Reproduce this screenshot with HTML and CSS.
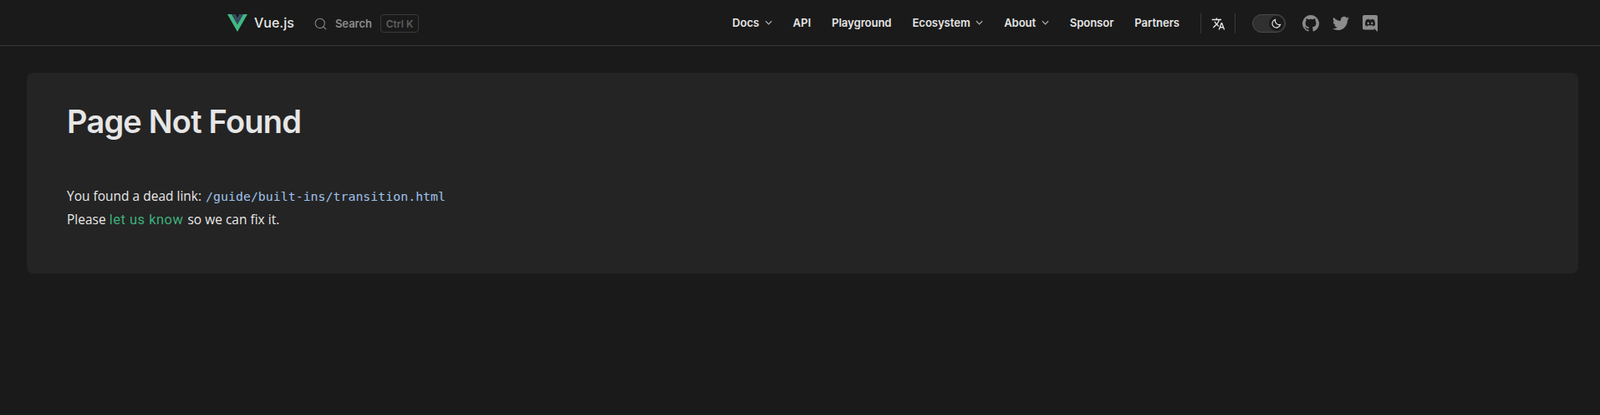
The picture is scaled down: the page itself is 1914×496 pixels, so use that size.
FILE: index.html
```html
<!DOCTYPE html>
<html lang="en">
<head>
<meta charset="utf-8">
<title>Page Not Found | Vue.js</title>
<link rel="stylesheet" href="styles.css">
</head>
<body>
<header class="nav">
  <div class="nav-inner">
    <a class="brand" href="#">
      <svg class="logo" viewBox="0 0 261.76 226.69" aria-hidden="true"><path fill="#41b883" d="M161.096.001l-30.225 52.351L100.647.001H-.005l130.876 226.688L261.749.001z"/><path fill="#34495e" d="M161.096.001l-30.225 52.351L100.647.001H52.346l78.526 136.01L209.398.001z"/></svg>
      <span>Vue.js</span>
    </a>
    <button class="search" type="button">
      <svg class="search-icon" viewBox="0 0 20 20" aria-hidden="true"><path d="M14.386 14.386l4.088 4.088-4.088-4.088A7.533 7.533 0 1 1 3.733 3.733a7.533 7.533 0 0 1 10.653 10.653z" fill="none" stroke="currentColor" stroke-width="1.4" stroke-linecap="round" stroke-linejoin="round"/></svg>
      <span class="search-label">Search</span>
      <kbd class="keys">Ctrl K</kbd>
    </button>
    <nav class="links">
      <a class="link" href="#">Docs<svg class="caret" viewBox="0 0 10 6"><path d="M1 1l4 4 4-4" /></svg></a>
      <a class="link" href="#">API</a>
      <a class="link" href="#">Playground</a>
      <a class="link" href="#">Ecosystem<svg class="caret" viewBox="0 0 10 6"><path d="M1 1l4 4 4-4" /></svg></a>
      <a class="link" href="#">About<svg class="caret" viewBox="0 0 10 6"><path d="M1 1l4 4 4-4" /></svg></a>
      <a class="link" href="#">Sponsor</a>
      <a class="link" href="#">Partners</a>
    </nav>
    <div class="translate">
      <svg viewBox="0 0 24 24" aria-hidden="true"><path fill="currentColor" d="M12.87 15.07l-2.54-2.51.03-.03c1.74-1.94 2.98-4.17 3.71-6.53H17V4h-7V2H8v2H1v1.99h11.17C11.5 7.92 10.44 9.75 9 11.35 8.07 10.32 7.3 9.19 6.69 8h-2c.73 1.63 1.73 3.17 2.98 4.56l-5.09 5.02L4 19l5-5 3.11 3.11.76-2.04zM18.5 10h-2L12 22h2l1.12-3h4.75L21 22h2l-4.5-12zm-2.62 7l1.62-4.33L19.12 17h-3.24z"/></svg>
    </div>
    <div class="toggle"><span class="knob"><svg viewBox="0 0 24 24" aria-hidden="true"><path d="M20 14.500A8.500 8.500 0 0 1 9.500 4a8.500 8.500 0 1 0 10.500 10.500z"/></svg></span></div>
    <div class="social">
      <svg viewBox="0 0 20 20" aria-hidden="true"><path d="M10 0a10 10 0 0 0-3.160 19.490c.5.090.680-.220.680-.480v-1.700c-2.780.6-3.370-1.340-3.370-1.340-.450-1.160-1.110-1.460-1.110-1.460-.910-.620.070-.610.070-.610 1 .070 1.530 1.030 1.530 1.030.890 1.530 2.340 1.090 2.910.830.090-.650.350-1.090.630-1.340-2.220-.250-4.550-1.110-4.550-4.940 0-1.090.390-1.980 1.030-2.680-.100-.250-.450-1.270.100-2.650 0 0 .840-.270 2.750 1.020a9.600 9.600 0 0 1 5 0c1.910-1.290 2.750-1.020 2.750-1.020.550 1.380.200 2.400.100 2.650.640.700 1.030 1.590 1.030 2.680 0 3.840-2.340 4.680-4.570 4.930.360.310.680.920.680 1.850v2.740c0 .270.180.580.690.480A10 10 0 0 0 10 0z"/></svg>
      <svg viewBox="0 0 20 20" aria-hidden="true"><path d="M20 3.800c-.740.330-1.530.550-2.360.650a4.100 4.100 0 0 0 1.800-2.270c-.790.470-1.670.810-2.600 1a4.100 4.100 0 0 0-7 3.740A11.650 11.650 0 0 1 1.390 2.630a4.100 4.100 0 0 0 1.270 5.480 4.080 4.080 0 0 1-1.860-.510v.050a4.100 4.100 0 0 0 3.290 4.020 4.100 4.100 0 0 1-1.850.070 4.100 4.100 0 0 0 3.830 2.850A8.230 8.230 0 0 1 0 16.290 11.600 11.600 0 0 0 6.290 18.100c7.550 0 11.670-6.250 11.670-11.670l-.010-.530A8.300 8.300 0 0 0 20 3.800z"/></svg>
      <svg class="discord" viewBox="0 0 20 22" aria-hidden="true"><path fill-rule="evenodd" d="M2.200 0h15.600C19 0 20 1 20 2.200V22l-2.400-2.100-1.300-1.200-1.400-1.300.6 2H2.200C1 19.400 0 18.400 0 17.200V2.200C0 1 1 0 2.200 0zm5.500 5.300c-1.200.2-2.300.6-3 1.100-1.100 2.200-1.500 4.400-1.300 6.900 1.100.8 2.200 1.300 3.200 1.500l.7-1c-.4-.1-.8-.3-1.200-.6l.3-.2c2.400 1.100 4.800 1.100 7.200 0l.3.200c-.4.300-.8.500-1.200.6l.7 1c1-.2 2.100-.7 3.200-1.500.3-2.900-.5-5.100-1.300-6.900-.8-.5-1.800-.9-3-1.100l-.4.800c-1.200-.2-2.300-.2-3.400 0l-.4-.8zM7.500 9.400c.8 0 1.300.7 1.300 1.400 0 .8-.6 1.400-1.300 1.400s-1.300-.6-1.300-1.400c0-.7.600-1.400 1.300-1.400zm5 0c.8 0 1.300.7 1.300 1.400 0 .8-.6 1.400-1.300 1.400s-1.300-.6-1.300-1.400c0-.7.600-1.400 1.300-1.400z"/></svg>
    </div>
  </div>
</header>
<main class="page">
  <section class="card">
    <h1 class="title">Page Not Found</h1>
    <p class="message">You found a dead link: <code class="path">/guide/built-ins/transition.html</code><br>Please <a class="report" href="#">let us know</a> so we can fix it.</p>
  </section>
</main>
</body>
</html>
```

FILE: styles.css
```css
* { box-sizing: border-box; }
html, body { margin: 0; height: 100%; }
body {
  background: #1a1a1a;
  color: rgba(255, 255, 255, 0.92);
  font-family: "Inter", "Liberation Sans", sans-serif;
  overflow: hidden;
}
a { color: inherit; text-decoration: none; }

.nav { height: 55px; border-bottom: 1px solid #383838; }
.nav-inner {
  width: 1376px;
  height: 54px;
  margin-left: 272px;
  display: flex;
  align-items: center;
}
.brand {
  display: flex;
  align-items: center;
  gap: 8px;
  font-size: 16px;
  font-weight: 500;
  color: #e6e6e6;
}
.logo { width: 24px; height: 21px; display: block; margin-top: 1px; }

.search {
  display: flex;
  align-items: center;
  margin-left: 24px;
  margin-top: 2px;
  padding: 0;
  border: 0;
  background: none;
  color: #8c8c8c;
  font: 600 13px "Inter", "Liberation Sans", sans-serif;
}
.search-icon { width: 15px; height: 15px; margin-right: 10px; }
.keys {
  margin-left: 10px;
  width: 46px;
  height: 22px;
  display: flex;
  align-items: center;
  justify-content: center;
  border: 1px solid #3a3a3a;
  border-radius: 4px;
  color: #5f5f5f;
  font: 600 12px "Inter", "Liberation Sans", sans-serif;
}

.links {
  display: flex;
  align-items: center;
  gap: 25px;
  margin-left: auto;
}
.link {
  display: flex;
  align-items: center;
  gap: 6.5px;
  font-size: 13px;
  font-weight: 600;
  color: #e6e6e6;
}
.caret { width: 9px; height: 6px; fill: none; stroke: #b8b8b8; stroke-width: 1.3; }

.translate {
  display: flex;
  align-items: center;
  justify-content: center;
  width: 42px;
  height: 24px;
  margin-left: 25px;
  margin-top: 2px;
  border-left: 1px solid #383838;
  border-right: 1px solid #383838;
  color: #e6e6e6;
}
.translate svg { width: 17px; height: 17px; }

.toggle {
  width: 40px;
  height: 22px;
  margin-left: 20px;
  margin-top: 2px;
  padding: 1px;
  display: flex;
  justify-content: flex-end;
  border: 1px solid #4a4a4a;
  border-radius: 11px;
  background: #303030;
}
.knob {
  width: 18px;
  height: 18px;
  border-radius: 50%;
  background: #1a1a1a;
  display: flex;
  align-items: center;
  justify-content: center;
}
.knob svg { width: 14px; height: 14px; fill: none; stroke: #e6e6e6; stroke-width: 2; }

.social { display: flex; align-items: center; gap: 16px; margin-left: 20px; margin-top: 2px; }
.social svg { width: 20px; height: 20px; fill: #8c8c8c; display: block; }
.social .discord { width: 18px; }

.page { padding: 32px 26px 0 32px; }
.card {
  height: 240px;
  padding: 38px 48px;
  border-radius: 8px;
  background: #242424;
}
.title {
  margin: 0;
  font-size: 38px;
  line-height: 40px;
  font-weight: 600;
  letter-spacing: -0.8px;
  color: #e6e6e6;
}
.message {
  margin: 55px 0 0;
  font-family: "Open Sans", "Noto Sans", sans-serif;
  font-size: 15.5px;
  line-height: 28px;
  color: rgba(255, 255, 255, 0.92);
}
.path {
  font-family: "DejaVu Sans Mono", monospace;
  font-size: 14.9px;
  line-height: 1;
  margin-left: 1px;
  color: #9fc1ea;
}
.report { font-family: "Roboto", sans-serif; font-size: 16.5px; line-height: 1; letter-spacing: 0.5px; margin-right: 1px; color: #3eaf7c; font-weight: 400; }
```
